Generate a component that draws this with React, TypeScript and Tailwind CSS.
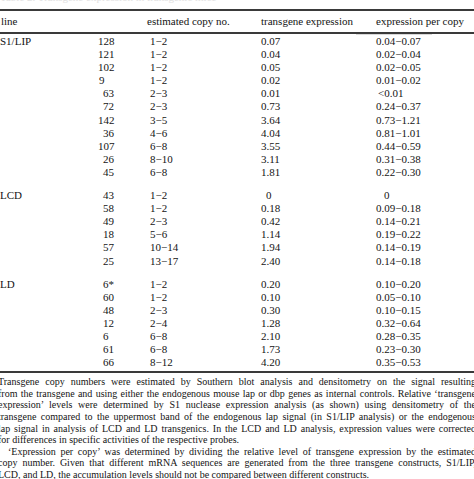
import React from 'react';

type Row = {
  no: string;
  noPad: string;
  copy: string;
  expr: string;
  exprPad?: string;
  per: string;
  perPad?: string;
};

const groups: { name: string; rows: Row[] }[] = [
  {
    name: 'S1/LIP',
    rows: [
      { no: '128', noPad: 'pl-0', copy: '1−2', expr: '0.07', per: '0.04−0.07' },
      { no: '121', noPad: 'pl-0', copy: '1−2', expr: '0.04', per: '0.02−0.04' },
      { no: '102', noPad: 'pl-0', copy: '1−2', expr: '0.05', per: '0.02−0.05' },
      { no: '9', noPad: 'pl-[1px]', copy: '1−2', expr: '0.02', per: '0.01−0.02' },
      { no: '63', noPad: 'pl-[5px]', copy: '2−3', expr: '0.01', per: '<0.01', perPad: 'pl-[2px]' },
      { no: '72', noPad: 'pl-[5px]', copy: '2−3', expr: '0.73', per: '0.24−0.37' },
      { no: '142', noPad: 'pl-0', copy: '3−5', expr: '3.64', per: '0.73−1.21' },
      { no: '36', noPad: 'pl-[5px]', copy: '4−6', expr: '4.04', per: '0.81−1.01' },
      { no: '107', noPad: 'pl-0', copy: '6−8', expr: '3.55', per: '0.44−0.59' },
      { no: '26', noPad: 'pl-[5px]', copy: '8−10', expr: '3.11', per: '0.31−0.38' },
      { no: '45', noPad: 'pl-[5px]', copy: '6−8', expr: '1.81', per: '0.22−0.30' },
    ],
  },
  {
    name: 'LCD',
    rows: [
      { no: '43', noPad: 'pl-[5px]', copy: '1−2', expr: '0', exprPad: 'pl-[5px]', per: '0', perPad: 'pl-[8px]' },
      { no: '58', noPad: 'pl-[5px]', copy: '1−2', expr: '0.18', per: '0.09−0.18' },
      { no: '49', noPad: 'pl-[5px]', copy: '2−3', expr: '0.42', per: '0.14−0.21' },
      { no: '18', noPad: 'pl-[5px]', copy: '5−6', expr: '1.14', per: '0.19−0.22' },
      { no: '57', noPad: 'pl-[5px]', copy: '10−14', expr: '1.94', per: '0.14−0.19' },
      { no: '25', noPad: 'pl-[5px]', copy: '13−17', expr: '2.40', per: '0.14−0.18' },
    ],
  },
  {
    name: 'LD',
    rows: [
      { no: '6*', noPad: 'pl-[5px]', copy: '1−2', expr: '0.20', per: '0.10−0.20' },
      { no: '60', noPad: 'pl-[5px]', copy: '1−2', expr: '0.10', per: '0.05−0.10' },
      { no: '48', noPad: 'pl-[5px]', copy: '2−3', expr: '0.30', per: '0.10−0.15' },
      { no: '12', noPad: 'pl-[5px]', copy: '2−4', expr: '1.28', per: '0.32−0.64' },
      { no: '6', noPad: 'pl-[5px]', copy: '6−8', expr: '2.10', per: '0.28−0.35' },
      { no: '61', noPad: 'pl-[5px]', copy: '6−8', expr: '1.73', per: '0.23−0.30' },
      { no: '66', noPad: 'pl-[5px]', copy: '8−12', expr: '4.20', per: '0.35−0.53' },
    ],
  },
];

const notes: { text: string; last?: boolean; indent?: boolean }[] = [
  { text: 'Transgene copy numbers were estimated by Southern blot analysis and densitometry on the signal resulting' },
  { text: 'from the transgene and using either the endogenous mouse lap or dbp genes as internal controls. Relative ‘transgene' },
  { text: 'expression’ levels were determined by S1 nuclease expression analysis (as shown) using densitometry of the' },
  { text: 'transgene compared to the uppermost band of the endogenous lap signal (in S1/LIP analysis) or the endogenous' },
  { text: 'lap signal in analysis of LCD and LD transgenics. In the LCD and LD analysis, expression values were corrected' },
  { text: 'for differences in specific activities of the respective probes.', last: true },
  { text: '‘Expression per copy’ was determined by dividing the relative level of transgene expression by the estimated', indent: true },
  { text: 'copy number. Given that different mRNA sequences are generated from the three transgene constructs, S1/LIP,' },
  { text: 'LCD, and LD, the accumulation levels should not be compared between different constructs.', last: true },
];

export default function App() {
  return (
    <div
      className="w-[474px] h-[479px] overflow-hidden bg-white text-[#141414]"
      style={{ fontFamily: "'Liberation Serif', 'Times New Roman', serif" }}
    >
      {/* caption remnant, mostly cut off by the crop */}
      <div className="h-[4px] overflow-hidden">
        <div className="-mt-[9px] text-[11px] leading-[13px] text-[#e2e2e2] whitespace-nowrap">
          Table 2. Transgene expression in transgenic mice
        </div>
      </div>

      <div className="mt-[5px] h-[2px] bg-[#3a3a3a]" />
      <div className="flex items-center h-[21px] text-[11px] whitespace-nowrap">
        <div className="w-[147px] pl-[1px]">line</div>
        <div className="w-[114px]">estimated copy no.</div>
        <div className="w-[115px]">transgene expression</div>
        <div>expression per copy</div>
      </div>
      <div className="h-[2px] bg-[#3a3a3a]" />
      <div className="ml-[356px] w-[76px] h-px bg-[#d8d8d8]" />

      <div className="text-[11px] whitespace-nowrap">
        {groups.map((g, gi) => (
          <div key={g.name} className={gi > 0 ? 'mt-[10px]' : ''}>
            {g.rows.map((r, i) => (
              <div key={i} className="flex h-[13.1px] leading-[13.1px]">
                <div className="w-[98px]">{i === 0 ? g.name : ''}</div>
                <div className={`w-[52px] ${r.noPad}`}>{r.no}</div>
                <div className="w-[111px]">{r.copy}</div>
                <div className={`w-[115px] ${r.exprPad ?? ''}`}>{r.expr}</div>
                <div className={r.perPad ?? ''}>{r.per}</div>
              </div>
            ))}
          </div>
        ))}
      </div>

      <div className="mt-[2px] h-[2px] bg-[#3a3a3a]" />

      <div className="mt-[3px] -ml-[2px] w-[478px] text-[10px] leading-[11.6px]">
        {notes.map((n, i) => (
          <div
            key={i}
            className={`whitespace-nowrap ${
              n.last ? 'text-left' : 'text-justify [text-align-last:justify]'
            } ${n.indent ? 'pl-[10px]' : ''}`}
          >
            {n.text}
          </div>
        ))}
      </div>
    </div>
  );
}
